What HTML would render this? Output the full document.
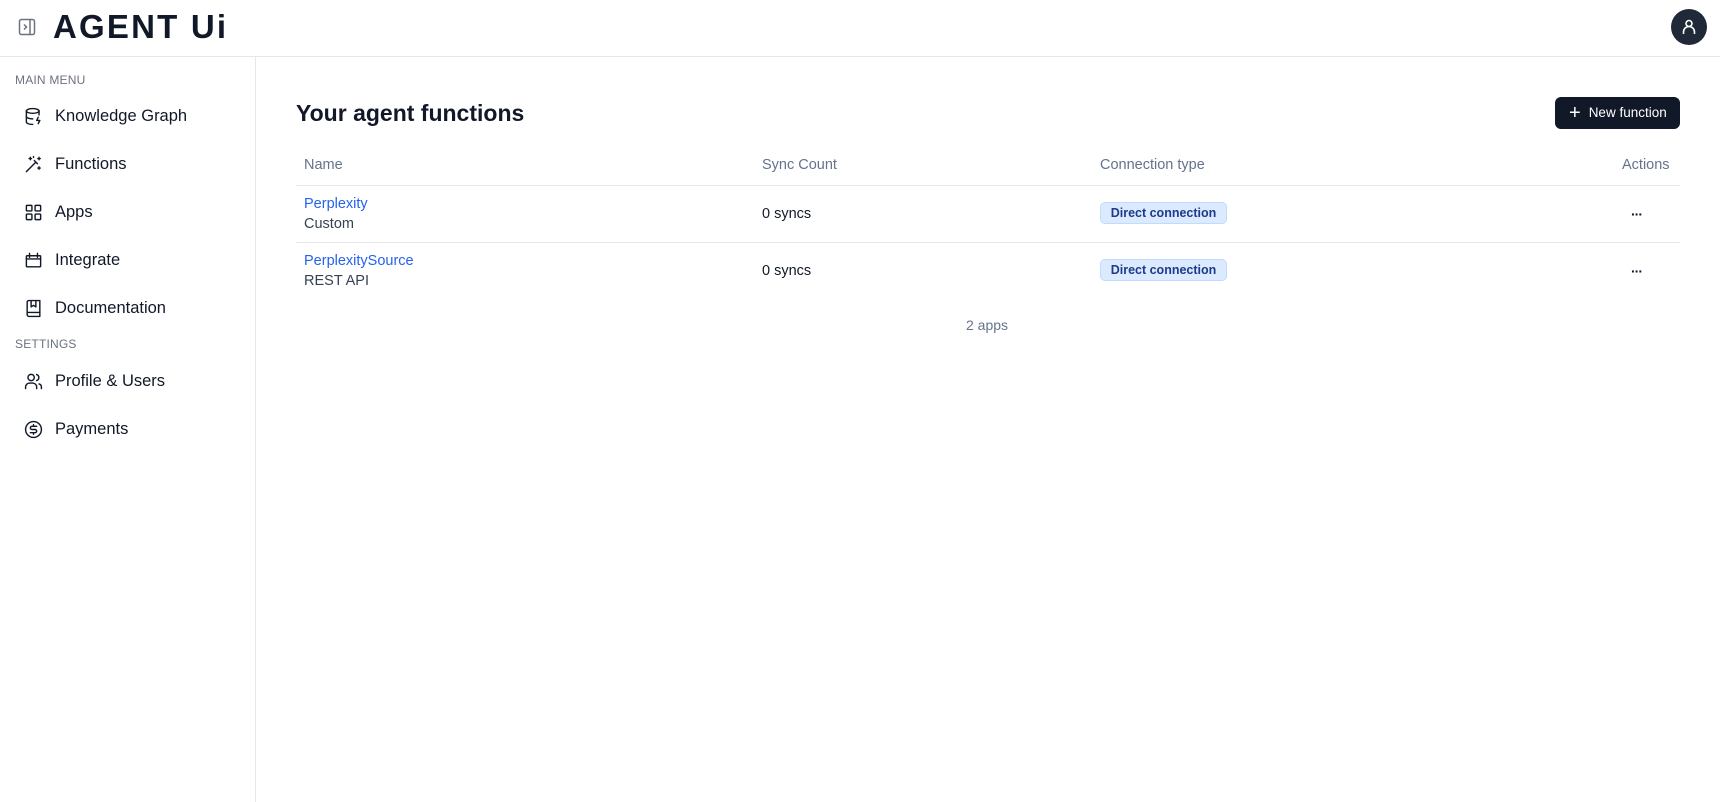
<!DOCTYPE html>
<html><head><meta charset="utf-8"><style>
*{margin:0;padding:0;box-sizing:border-box}
body{width:1720px;height:802px;font-family:"Liberation Sans",sans-serif;color:#0f172a;background:#fff;position:relative;overflow:hidden}
.hdr{position:absolute;left:0;top:0;width:1720px;height:57px;border-bottom:1px solid #e5e7eb}
.side{position:absolute;left:0;top:57px;width:256px;height:745px;border-right:1px solid #e5e7eb}
.sec{position:absolute;left:15px;font-size:12px;color:#6b7280;letter-spacing:.2px}
.item{position:absolute;left:24px;font-size:16.5px;color:#111827;display:flex;align-items:center;height:24px}
.item svg{width:19px;height:19px;margin-right:12px;fill:none;stroke:#111827;stroke-width:1.8;stroke-linecap:round;stroke-linejoin:round}
.abs{position:absolute}
.th{position:absolute;top:157px;font-size:14.5px;color:#64748b}
.line{position:absolute;left:296px;width:1384px;height:1px;background:#e5e7eb}
.link{color:#2563eb;font-size:14.5px}
.sub{color:#374151;font-size:14.5px}
.badge{position:absolute;left:1100px;width:127px;height:22px;border:1px solid #bfdbfe;background:#dbeafe;border-radius:5px;color:#1e3a8a;font-size:12.5px;font-weight:bold;text-align:center;line-height:20px}
.dots{position:absolute;left:1631px;font-size:14px;font-weight:bold;letter-spacing:-1px}
</style></head><body>
<div class="hdr">
<svg class="abs" style="left:18px;top:18px" width="18" height="18" viewBox="0 0 18 18" fill="none" stroke="#6b7280" stroke-width="1.5"><rect x="1.5" y="1.5" width="15" height="15" rx="2"/><line x1="12" y1="2" x2="12" y2="16"/><path d="M6 6.5l2.5 2.5L6 11.5"/></svg>
<div class="abs" style="left:53px;top:8px;font-size:33px;font-weight:bold;color:#111827;letter-spacing:2.2px">AGENT Ui</div>
<div class="abs" style="left:1671px;top:9px;width:36px;height:36px;border-radius:50%;background:#1f2937"></div>
<svg class="abs" style="left:1680px;top:18px" width="18" height="18" viewBox="0 0 18 18" fill="none" stroke="#fff" stroke-width="1.6"><circle cx="9" cy="5.5" r="3"/><path d="M3.5 16v-2a5.5 5.5 0 0 1 11 0v2"/></svg>
</div>
<div class="side">
<div class="sec" style="top:16px">MAIN MENU</div>
<div class="item" style="top:47px"><svg viewBox="0 0 24 24"><ellipse cx="11" cy="5" rx="8" ry="3"/><path d="M3 5v14c0 1.7 3.6 3 8 3"/><path d="M3 12c0 1.7 3.6 3 8 3"/><path d="M19 5v5"/><path d="M18 13l-2 4h4l-2 4"/></svg>Knowledge Graph</div>
<div class="item" style="top:95px"><svg viewBox="0 0 24 24"><path d="M3 21L15 9"/><path d="M13 7l4 4"/><path d="M8 3v3M6.5 4.5h3M19 3v3M17.5 4.5h3M19 15v3M17.5 16.5h3M12 2v1"/></svg>Functions</div>
<div class="item" style="top:143px"><svg viewBox="0 0 24 24"><rect x="3" y="3" width="7" height="7" rx="1"/><rect x="14" y="3" width="7" height="7" rx="1"/><rect x="3" y="14" width="7" height="7" rx="1"/><rect x="14" y="14" width="7" height="7" rx="1"/></svg>Apps</div>
<div class="item" style="top:191px"><svg viewBox="0 0 24 24"><rect x="3" y="6" width="18" height="14" rx="1"/><path d="M3 10h18M7 3v5M17 3v5M12 6v0"/></svg>Integrate</div>
<div class="item" style="top:239px"><svg viewBox="0 0 24 24"><path d="M4 19.5V4a2 2 0 0 1 2-2h14v20H6.5A2.5 2.5 0 0 1 4 19.5z"/><path d="M4 17h16"/><path d="M9 3v7l3-2 3 2V3"/></svg>Documentation</div>
<div class="sec" style="top:280px">SETTINGS</div>
<div class="item" style="top:312px"><svg viewBox="0 0 24 24"><circle cx="9" cy="7" r="4"/><path d="M2 21v-2a5 5 0 0 1 5-5h4a5 5 0 0 1 5 5v2"/><path d="M16 3.2a4 4 0 0 1 0 7.6M22 21v-2a4 4 0 0 0-3-3.9"/></svg>Profile &amp; Users</div>
<div class="item" style="top:360px"><svg viewBox="0 0 24 24"><circle cx="12" cy="12" r="10"/><path d="M16 8h-6a2 2 0 1 0 0 4h4a2 2 0 1 1 0 4H8M12 6v2M12 16v2"/></svg>Payments</div>
</div>
<div class="abs" style="left:296px;top:100px;font-size:23px;font-weight:bold;color:#111827">Your agent functions</div>
<div class="abs" style="left:1555px;top:97px;width:125px;height:32px;background:#111827;border-radius:6px;color:#fff;font-size:13.5px;line-height:32px;padding-left:14px"><span style="font-size:20px;font-weight:300;vertical-align:-2px;margin-right:8px">+</span>New function</div>
<div class="th" style="left:304px">Name</div>
<div class="th" style="left:762px">Sync Count</div>
<div class="th" style="left:1100px">Connection type</div>
<div class="th" style="left:1622px">Actions</div>
<div class="line" style="top:185px"></div>
<div class="abs link" style="left:304px;top:196px">Perplexity</div>
<div class="abs sub" style="left:304px;top:216px">Custom</div>
<div class="abs sub" style="left:762px;top:206px;color:#111827">0 syncs</div>
<div class="badge" style="top:202px">Direct connection</div>
<div class="dots" style="top:206px">···</div>
<div class="line" style="top:242px"></div>
<div class="abs link" style="left:304px;top:253px">PerplexitySource</div>
<div class="abs sub" style="left:304px;top:273px">REST API</div>
<div class="abs sub" style="left:762px;top:263px;color:#111827">0 syncs</div>
<div class="badge" style="top:259px">Direct connection</div>
<div class="dots" style="top:263px">···</div>
<div class="abs" style="left:966px;top:317px;font-size:14px;color:#64748b">2 apps</div>
</body></html>
